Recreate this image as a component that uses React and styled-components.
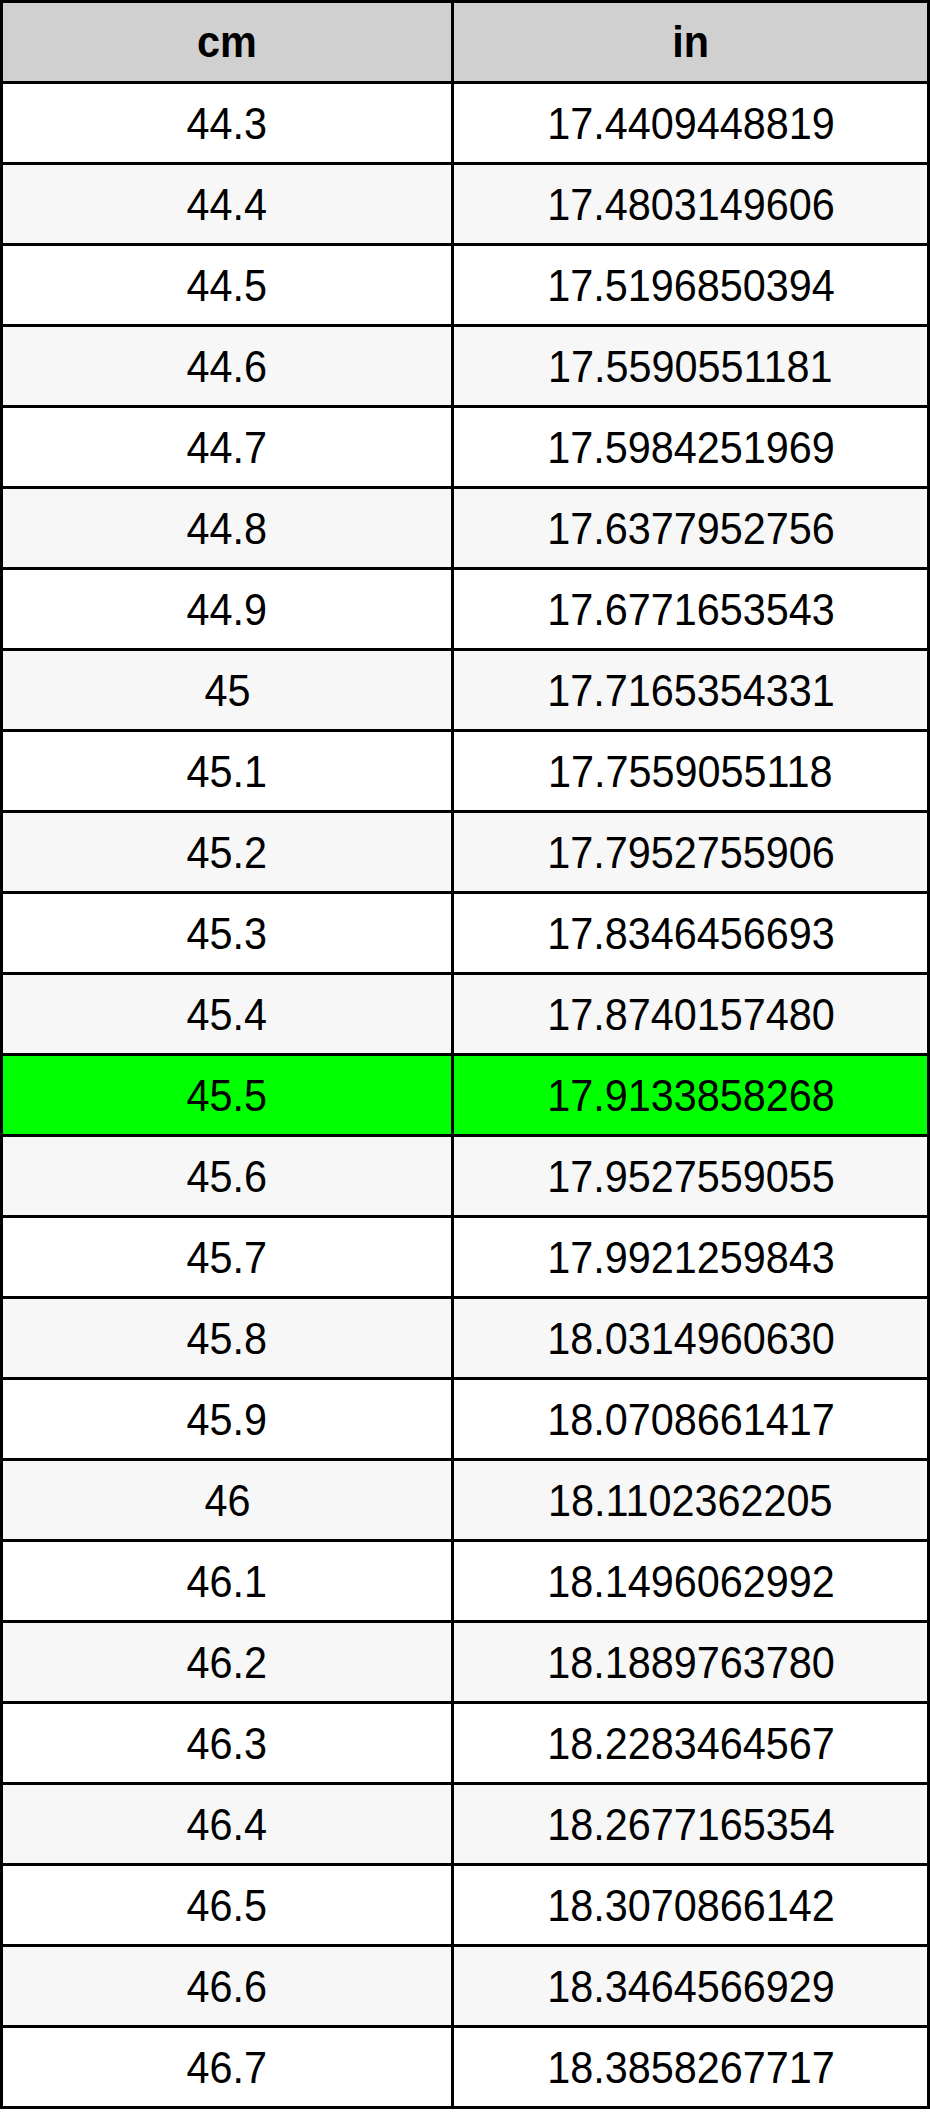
import React from 'react';
import styled, { createGlobalStyle } from 'styled-components';

const GlobalStyle = createGlobalStyle`
  html, body {
    margin: 0;
    padding: 0;
    background: #ffffff;
  }
  body {
    font-family: "Liberation Sans", Arial, sans-serif;
  }
`;

const rows = [
  ['44.3', '17.4409448819'],
  ['44.4', '17.4803149606'],
  ['44.5', '17.5196850394'],
  ['44.6', '17.5590551181'],
  ['44.7', '17.5984251969'],
  ['44.8', '17.6377952756'],
  ['44.9', '17.6771653543'],
  ['45', '17.7165354331'],
  ['45.1', '17.7559055118'],
  ['45.2', '17.7952755906'],
  ['45.3', '17.8346456693'],
  ['45.4', '17.8740157480'],
  ['45.5', '17.9133858268'],
  ['45.6', '17.9527559055'],
  ['45.7', '17.9921259843'],
  ['45.8', '18.0314960630'],
  ['45.9', '18.0708661417'],
  ['46', '18.1102362205'],
  ['46.1', '18.1496062992'],
  ['46.2', '18.1889763780'],
  ['46.3', '18.2283464567'],
  ['46.4', '18.2677165354'],
  ['46.5', '18.3070866142'],
  ['46.6', '18.3464566929'],
  ['46.7', '18.3858267717'],
];

const HIGHLIGHT = '45.5';

const Table = styled.div`
  display: grid;
  grid-template-columns: 448px 473px;
  grid-auto-rows: 78px;
  gap: 3px;
  padding: 3px;
  width: 930px;
  box-sizing: border-box;
  background: #000000;
`;

const Cell = styled.div`
  display: flex;
  align-items: center;
  justify-content: center;
  font-size: 44px;
  line-height: 1;
  color: #000000;
  background: ${({ tone }) => tone};
  padding-top: ${({ head }) => (head ? '0' : '1px')};
  box-sizing: border-box;
`;

const HeadCell = styled(Cell)`
  font-weight: bold;
  background: #d0d0d0;
`;

// the source type is a touch narrower than Liberation Sans
const Label = styled.span`
  display: inline-block;
  transform: scaleX(0.94);
`;

const toneFor = (value, index) => {
  if (value === HIGHLIGHT) return '#00ff00';
  return index % 2 === 0 ? '#ffffff' : '#f7f7f7';
};

export default function App() {
  return (
    <>
      <GlobalStyle />
      <Table>
        <HeadCell head><Label>cm</Label></HeadCell>
        <HeadCell head><Label>in</Label></HeadCell>
        {rows.map(([cm, inch], i) => (
          <React.Fragment key={cm}>
            <Cell tone={toneFor(cm, i)}><Label>{cm}</Label></Cell>
            <Cell tone={toneFor(cm, i)}><Label>{inch}</Label></Cell>
          </React.Fragment>
        ))}
      </Table>
    </>
  );
}
